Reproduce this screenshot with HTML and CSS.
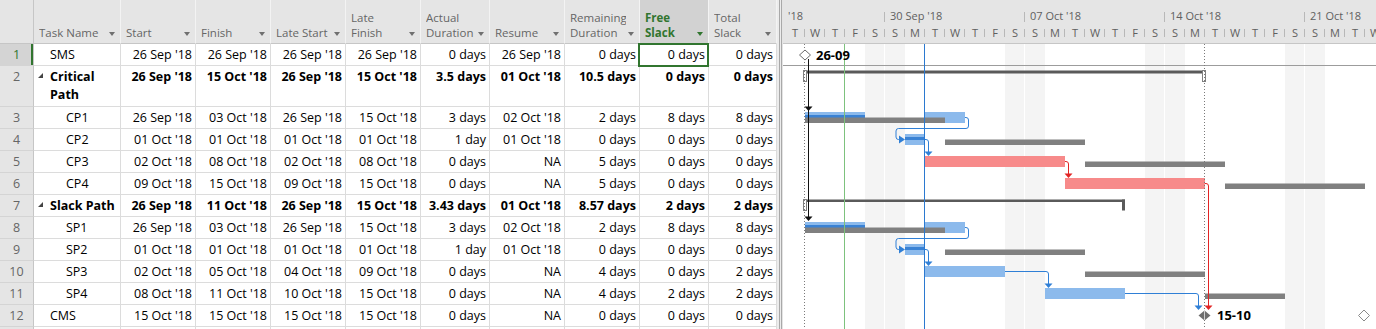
FILE: index.html
```html
<!DOCTYPE html>
<html>
<head>
<meta charset="utf-8">
<link rel="stylesheet" href="styles.css">
</head>
<body>
<div class="app">
  <div class="sheet">
    <div class="corner"></div>
    <div class="h"><span class="t">Task Name</span><span class="dd"></span></div>
    <div class="h"><span class="t">Start</span><span class="dd"></span></div>
    <div class="h"><span class="t">Finish</span><span class="dd"></span></div>
    <div class="h"><span class="t">Late Start</span><span class="dd"></span></div>
    <div class="h"><span class="t">Late<br>Finish</span><span class="dd"></span></div>
    <div class="h"><span class="t">Actual<br>Duration</span><span class="dd"></span></div>
    <div class="h"><span class="t">Resume</span><span class="dd"></span></div>
    <div class="h"><span class="t">Remaining<br>Duration</span><span class="dd"></span></div>
    <div class="h sel"><span class="t">Free<br>Slack</span><span class="dd"></span></div>
    <div class="h"><span class="t">Total<br>Slack</span><span class="dd"></span></div>

    <div class="rn cur">1</div>
    <div class="c n">SMS</div>
    <div class="c">26 Sep '18</div><div class="c">26 Sep '18</div><div class="c">26 Sep '18</div><div class="c">26 Sep '18</div>
    <div class="c">0 days</div><div class="c">26 Sep '18</div><div class="c">0 days</div><div class="c sel-cell">0 days</div><div class="c">0 days</div>

    <div class="rn">2</div>
    <div class="c n sum b"><span class="tog"></span>Critical Path</div>
    <div class="c b">26 Sep '18</div><div class="c b">15 Oct '18</div><div class="c b">26 Sep '18</div><div class="c b">15 Oct '18</div>
    <div class="c b">3.5 days</div><div class="c b">01 Oct '18</div><div class="c b">10.5 days</div><div class="c b">0 days</div><div class="c b">0 days</div>

    <div class="rn">3</div>
    <div class="c n n2">CP1</div>
    <div class="c">26 Sep '18</div><div class="c">03 Oct '18</div><div class="c">26 Sep '18</div><div class="c">15 Oct '18</div>
    <div class="c">3 days</div><div class="c">02 Oct '18</div><div class="c">2 days</div><div class="c">8 days</div><div class="c">8 days</div>

    <div class="rn">4</div>
    <div class="c n n2">CP2</div>
    <div class="c">01 Oct '18</div><div class="c">01 Oct '18</div><div class="c">01 Oct '18</div><div class="c">01 Oct '18</div>
    <div class="c">1 day</div><div class="c">01 Oct '18</div><div class="c">0 days</div><div class="c">0 days</div><div class="c">0 days</div>

    <div class="rn">5</div>
    <div class="c n n2">CP3</div>
    <div class="c">02 Oct '18</div><div class="c">08 Oct '18</div><div class="c">02 Oct '18</div><div class="c">08 Oct '18</div>
    <div class="c">0 days</div><div class="c">NA</div><div class="c">5 days</div><div class="c">0 days</div><div class="c">0 days</div>

    <div class="rn">6</div>
    <div class="c n n2">CP4</div>
    <div class="c">09 Oct '18</div><div class="c">15 Oct '18</div><div class="c">09 Oct '18</div><div class="c">15 Oct '18</div>
    <div class="c">0 days</div><div class="c">NA</div><div class="c">5 days</div><div class="c">0 days</div><div class="c">0 days</div>

    <div class="rn">7</div>
    <div class="c n sum b nw"><span class="tog"></span>Slack Path</div>
    <div class="c b">26 Sep '18</div><div class="c b">11 Oct '18</div><div class="c b">26 Sep '18</div><div class="c b">15 Oct '18</div>
    <div class="c b">3.43 days</div><div class="c b">01 Oct '18</div><div class="c b">8.57 days</div><div class="c b">2 days</div><div class="c b">2 days</div>

    <div class="rn">8</div>
    <div class="c n n2">SP1</div>
    <div class="c">26 Sep '18</div><div class="c">03 Oct '18</div><div class="c">26 Sep '18</div><div class="c">15 Oct '18</div>
    <div class="c">3 days</div><div class="c">02 Oct '18</div><div class="c">2 days</div><div class="c">8 days</div><div class="c">8 days</div>

    <div class="rn">9</div>
    <div class="c n n2">SP2</div>
    <div class="c">01 Oct '18</div><div class="c">01 Oct '18</div><div class="c">01 Oct '18</div><div class="c">01 Oct '18</div>
    <div class="c">1 day</div><div class="c">01 Oct '18</div><div class="c">0 days</div><div class="c">0 days</div><div class="c">0 days</div>

    <div class="rn">10</div>
    <div class="c n n2">SP3</div>
    <div class="c">02 Oct '18</div><div class="c">05 Oct '18</div><div class="c">04 Oct '18</div><div class="c">09 Oct '18</div>
    <div class="c">0 days</div><div class="c">NA</div><div class="c">4 days</div><div class="c">0 days</div><div class="c">2 days</div>

    <div class="rn">11</div>
    <div class="c n n2">SP4</div>
    <div class="c">08 Oct '18</div><div class="c">11 Oct '18</div><div class="c">10 Oct '18</div><div class="c">15 Oct '18</div>
    <div class="c">0 days</div><div class="c">NA</div><div class="c">4 days</div><div class="c">2 days</div><div class="c">2 days</div>

    <div class="rn">12</div>
    <div class="c n">CMS</div>
    <div class="c">15 Oct '18</div><div class="c">15 Oct '18</div><div class="c">15 Oct '18</div><div class="c">15 Oct '18</div>
    <div class="c">0 days</div><div class="c">NA</div><div class="c">0 days</div><div class="c">0 days</div><div class="c">0 days</div>

    <div class="rn"></div>
    <div class="c"></div><div class="c"></div><div class="c"></div><div class="c"></div><div class="c"></div>
    <div class="c"></div><div class="c"></div><div class="c"></div><div class="c"></div><div class="c"></div>
  </div>

  <div class="splitter"></div>

  <svg class="chart" width="593" height="329" viewBox="783 0 593 329" xmlns="http://www.w3.org/2000/svg">
    <!-- timescale header -->
    <rect x="783" y="0" width="593" height="43" fill="#e5e5e5"/>
    <line x1="783" y1="43.5" x2="1376" y2="43.5" stroke="#c6c6c6"/>
    <g class="ticks" stroke="#b8b8b8" stroke-width="1">
      <line x1="884.5" y1="12" x2="884.5" y2="22"/>
      <line x1="1024.5" y1="12" x2="1024.5" y2="22"/>
      <line x1="1164.5" y1="12" x2="1164.5" y2="22"/>
      <line x1="1304.5" y1="12" x2="1304.5" y2="22"/>
      <path d="M804.5 29V37M824.5 29V37M844.5 29V37M864.5 29V37M884.5 29V37M904.5 29V37M924.5 29V37M944.5 29V37M964.5 29V37M984.5 29V37M1004.5 29V37M1024.5 29V37M1044.5 29V37M1064.5 29V37M1084.5 29V37M1104.5 29V37M1124.5 29V37M1144.5 29V37M1164.5 29V37M1184.5 29V37M1204.5 29V37M1224.5 29V37M1244.5 29V37M1264.5 29V37M1284.5 29V37M1304.5 29V37M1324.5 29V37M1344.5 29V37M1364.5 29V37"/>
    </g>
    <g class="wk">
      <text x="788" y="20">'18</text>
      <text x="890" y="20">30 Sep '18</text>
      <text x="1030" y="20">07 Oct '18</text>
      <text x="1170" y="20">14 Oct '18</text>
      <text x="1310" y="20">21 Oct '18</text>
    </g>
    <g class="day">
      <text x="795" y="37">T</text><text x="815" y="37">W</text><text x="835" y="37">T</text><text x="855" y="37">F</text><text x="875" y="37">S</text>
      <text x="895" y="37">S</text><text x="915" y="37">M</text><text x="935" y="37">T</text><text x="955" y="37">W</text><text x="975" y="37">T</text><text x="995" y="37">F</text><text x="1015" y="37">S</text>
      <text x="1035" y="37">S</text><text x="1055" y="37">M</text><text x="1075" y="37">T</text><text x="1095" y="37">W</text><text x="1115" y="37">T</text><text x="1135" y="37">F</text><text x="1155" y="37">S</text>
      <text x="1175" y="37">S</text><text x="1195" y="37">M</text><text x="1215" y="37">T</text><text x="1235" y="37">W</text><text x="1255" y="37">T</text><text x="1275" y="37">F</text><text x="1295" y="37">S</text>
      <text x="1315" y="37">S</text><text x="1335" y="37">M</text><text x="1355" y="37">T</text><text x="1375" y="37">W</text>
    </g>

    <!-- non-working shading -->
    <g fill="#f4f4f4">
      <rect x="865" y="44" width="40" height="285"/>
      <rect x="1005" y="44" width="40" height="285"/>
      <rect x="1145" y="44" width="40" height="285"/>
      <rect x="1285" y="44" width="40" height="285"/>
    </g>
    <g stroke="#ffffff">
      <line x1="884.5" y1="44" x2="884.5" y2="329"/>
      <line x1="1024.5" y1="44" x2="1024.5" y2="329"/>
      <line x1="1164.5" y1="44" x2="1164.5" y2="329"/>
      <line x1="1304.5" y1="44" x2="1304.5" y2="329"/>
    </g>
    <line x1="783" y1="65.5" x2="1376" y2="65.5" stroke="#9c9c9c"/>

    <!-- summary bars -->
    <rect x="805" y="70.5" width="400" height="3" fill="#5a5a5a"/>
    <rect x="803.5" y="70.5" width="3" height="11" fill="#fff" stroke="#808080"/>
    <rect x="1202.5" y="70.5" width="3" height="11" fill="#fff" stroke="#808080"/>
    <rect x="805" y="199.5" width="320" height="2.5" fill="#5a5a5a"/>
    <rect x="803.5" y="199.5" width="3" height="11" fill="#fff" stroke="#808080"/>
    <rect x="1122" y="199.5" width="3" height="11" fill="#5a5a5a"/>

    <!-- task bars -->
    <g fill="#8cbaec">
      <rect x="805" y="112" width="60" height="11"/>
      <rect x="925" y="112" width="40" height="11"/>
      <rect x="905" y="134" width="20" height="11"/>
      <rect x="805" y="222" width="60" height="11"/>
      <rect x="925" y="222" width="40" height="11"/>
      <rect x="905" y="244" width="20" height="11"/>
      <rect x="925" y="266" width="80" height="11"/>
      <rect x="1045" y="288" width="80" height="11"/>
    </g>
    <g fill="#f78a8a">
      <rect x="925" y="156" width="140" height="11"/>
      <rect x="1065" y="178" width="140" height="11"/>
    </g>
    <g fill="#3a82d4">
      <rect x="805" y="115" width="60" height="3"/>
      <rect x="905" y="137" width="20" height="3"/>
      <rect x="805" y="225" width="60" height="3"/>
      <rect x="905" y="247" width="20" height="3"/>
    </g>
    <g fill="#808080">
      <rect x="805" y="117.5" width="140" height="5.5"/>
      <rect x="945" y="139.5" width="140" height="5.5"/>
      <rect x="1085" y="161.5" width="140" height="5.5"/>
      <rect x="1225" y="183.5" width="140" height="5.5"/>
      <rect x="805" y="227.5" width="140" height="5.5"/>
      <rect x="945" y="249.5" width="140" height="5.5"/>
      <rect x="1085" y="271.5" width="120" height="5.5"/>
      <rect x="1205" y="293.5" width="80" height="5.5"/>
    </g>

    <!-- status / date lines -->
    <line x1="844.5" y1="44" x2="844.5" y2="329" stroke="#7dc27d"/>
    <line x1="924.5" y1="44" x2="924.5" y2="329" stroke="#2b79d0"/>
    <line x1="804.5" y1="44" x2="804.5" y2="329" stroke="#7a7a7a" stroke-dasharray="1 2"/>
    <line x1="1204.5" y1="44" x2="1204.5" y2="329" stroke="#7a7a7a" stroke-dasharray="1 2"/>

    <!-- links -->
    <g fill="none" stroke="#2f7fd6">
      <path d="M965 117.5H966Q968.5 117.5 968.5 120V126Q968.5 128.5 966 128.5H898.5Q896 128.5 896 131V137Q896 139.5 898.5 139.5H900"/>
      <path d="M925 139.5H926Q928.5 139.5 928.5 142V152"/>
      <path d="M965 227.5H966Q968.5 227.5 968.5 230V236Q968.5 238.5 966 238.5H898.5Q896 238.5 896 241V247Q896 249.5 898.5 249.5H900"/>
      <path d="M925 249.5H926Q928.5 249.5 928.5 252V262"/>
      <path d="M1005 271.5H1046Q1048.5 271.5 1048.5 274V284"/>
      <path d="M1125 293.5H1196Q1198.5 293.5 1198.5 296V306"/>
    </g>
    <g fill="#2f7fd6">
      <polygon points="899,135.5 905,139.5 899,143.5"/>
      <polygon points="924.5,151.5 932.5,151.5 928.5,156"/>
      <polygon points="899,245.5 905,249.5 899,253.5"/>
      <polygon points="924.5,261.5 932.5,261.5 928.5,266"/>
      <polygon points="1044.5,283.5 1052.5,283.5 1048.5,288"/>
      <polygon points="1194.5,305.5 1202.5,305.5 1198.5,310"/>
    </g>
    <g fill="none" stroke="#e22424">
      <path d="M1065 161.5H1066Q1068.5 161.5 1068.5 164V174"/>
      <path d="M1205 183.5H1206Q1208.5 183.5 1208.5 186V306"/>
    </g>
    <g fill="#e22424">
      <polygon points="1064.5,173.5 1072.5,173.5 1068.5,178"/>
      <polygon points="1204.5,305.5 1212.5,305.5 1208.5,310"/>
    </g>
    <line x1="808.5" y1="59" x2="808.5" y2="217" stroke="#111"/>
    <g fill="#111">
      <polygon points="804.5,106.5 812.5,106.5 808.5,111"/>
      <polygon points="804.5,216.5 812.5,216.5 808.5,221"/>
    </g>

    <!-- milestones -->
    <polygon points="805,50 810.5,55 805,60 799.5,55" fill="#fff" stroke="#6b6b6b"/>
    <text class="ms" x="816" y="59.5">26-09</text>
    <polygon points="1204.5,310.5 1210.5,315.5 1204.5,320.5 1198.5,315.5" fill="#6e6e6e"/>
    <line x1="1204.5" y1="311" x2="1204.5" y2="320" stroke="#cfcfcf"/>
    <text class="ms" x="1217" y="320">15-10</text>
    <polygon points="1364,310 1369.5,315.5 1364,321 1358.5,315.5" fill="#fff" stroke="#8a8a8a"/>
  </svg>
</div>
</body>
</html>
```

FILE: styles.css
```css
* { box-sizing: border-box; }
html, body { margin: 0; padding: 0; background: #fff; }
body {
  font-family: "Open Sans", "Noto Sans", sans-serif;
  font-size: 12.5px;
  color: #000;
}
.app {
  display: flex;
  width: 1376px;
  height: 329px;
  overflow: hidden;
}
.sheet {
  flex: none;
  width: 777px;
  height: 329px;
  display: grid;
  grid-template-columns: 34px 87px 75px 75px 75px 75px 69px 75px 75px 69px 68px;
  grid-template-rows: 44px 22px 41px repeat(11, 22px);
  align-content: start;
  overflow: hidden;
}
.corner {
  background: #e5e5e5;
  border-right: 1px solid #c6c6c6;
  border-bottom: 1px solid #c6c6c6;
}
.h {
  background: #e5e5e5;
  border-right: 1px solid #f3f3f3;
  border-bottom: 1px solid #c6c6c6;
  display: flex;
  align-items: flex-end;
  padding: 0 0 3px 5px;
  font-size: 11.5px;
  line-height: 15px;
  color: #666;
}
.h .t {
  flex: 1;
  min-width: 0;
  overflow: hidden;
  white-space: nowrap;
}
.h .dd {
  flex: none;
  width: 13px;
  height: 15px;
  display: flex;
  align-items: flex-end;
  padding: 0 0 4px 2px;
}
.h .dd::before {
  content: "";
  border-left: 3px solid transparent;
  border-right: 3px solid transparent;
  border-top: 4px solid #707070;
}
.h.sel {
  background: #d2d2d2;
  color: #31752f;
  font-weight: 700;
}
.h.sel .dd::before { border-top-color: #31752f; }
.rn {
  background: #e5e5e5;
  border-right: 1px solid #c6c6c6;
  border-bottom: 1px solid #d4d4d4;
  color: #666;
  text-align: center;
  padding-top: 2px;
  line-height: 18px;
}
.rn.cur {
  background: #d4d4d4;
  color: #31752f;
  box-shadow: inset -2px 0 0 #31752f;
}
.c {
  border-right: 1px solid #dcdcdc;
  border-bottom: 1px solid #dcdcdc;
  padding: 2px 3px 0 2px;
  line-height: 18px;
  text-align: right;
  white-space: nowrap;
  overflow: hidden;
}
.n {
  text-align: left;
  white-space: normal;
  padding-left: 16px;
}
.n2 { padding-left: 32px; }
.nw { white-space: nowrap; }
.b { font-weight: 700; }
.sum { text-indent: -12px; }
.tog {
  display: inline-block;
  width: 0;
  height: 0;
  border-style: solid;
  border-width: 0 0 5px 5px;
  border-color: transparent transparent #444 transparent;
  margin-right: 7px;
  vertical-align: 3px;
}
.sel-cell {
  position: relative;
  overflow: visible;
}
.sel-cell::after {
  content: "";
  position: absolute;
  top: -1px;
  left: -2px;
  right: -1px;
  bottom: -2px;
  border: 2px solid #31752f;
}
.splitter {
  flex: none;
  width: 6px;
  height: 329px;
  background: linear-gradient(to right, #ececec 0 2px, #a9a9a9 2px 3px, #ececec 3px 4px, #a9a9a9 4px 5px, #e4e4e4 5px 6px);
}
.chart {
  flex: none;
  display: block;
}
.chart text {
  font-family: "Open Sans", "Noto Sans", sans-serif;
}
.wk text {
  font-size: 11px;
  fill: #5f5f5f;
}
.day text {
  font-size: 11px;
  fill: #5f5f5f;
  text-anchor: middle;
}
.chart .ms {
  font-size: 13px;
  font-weight: 700;
  fill: #000;
}
```
